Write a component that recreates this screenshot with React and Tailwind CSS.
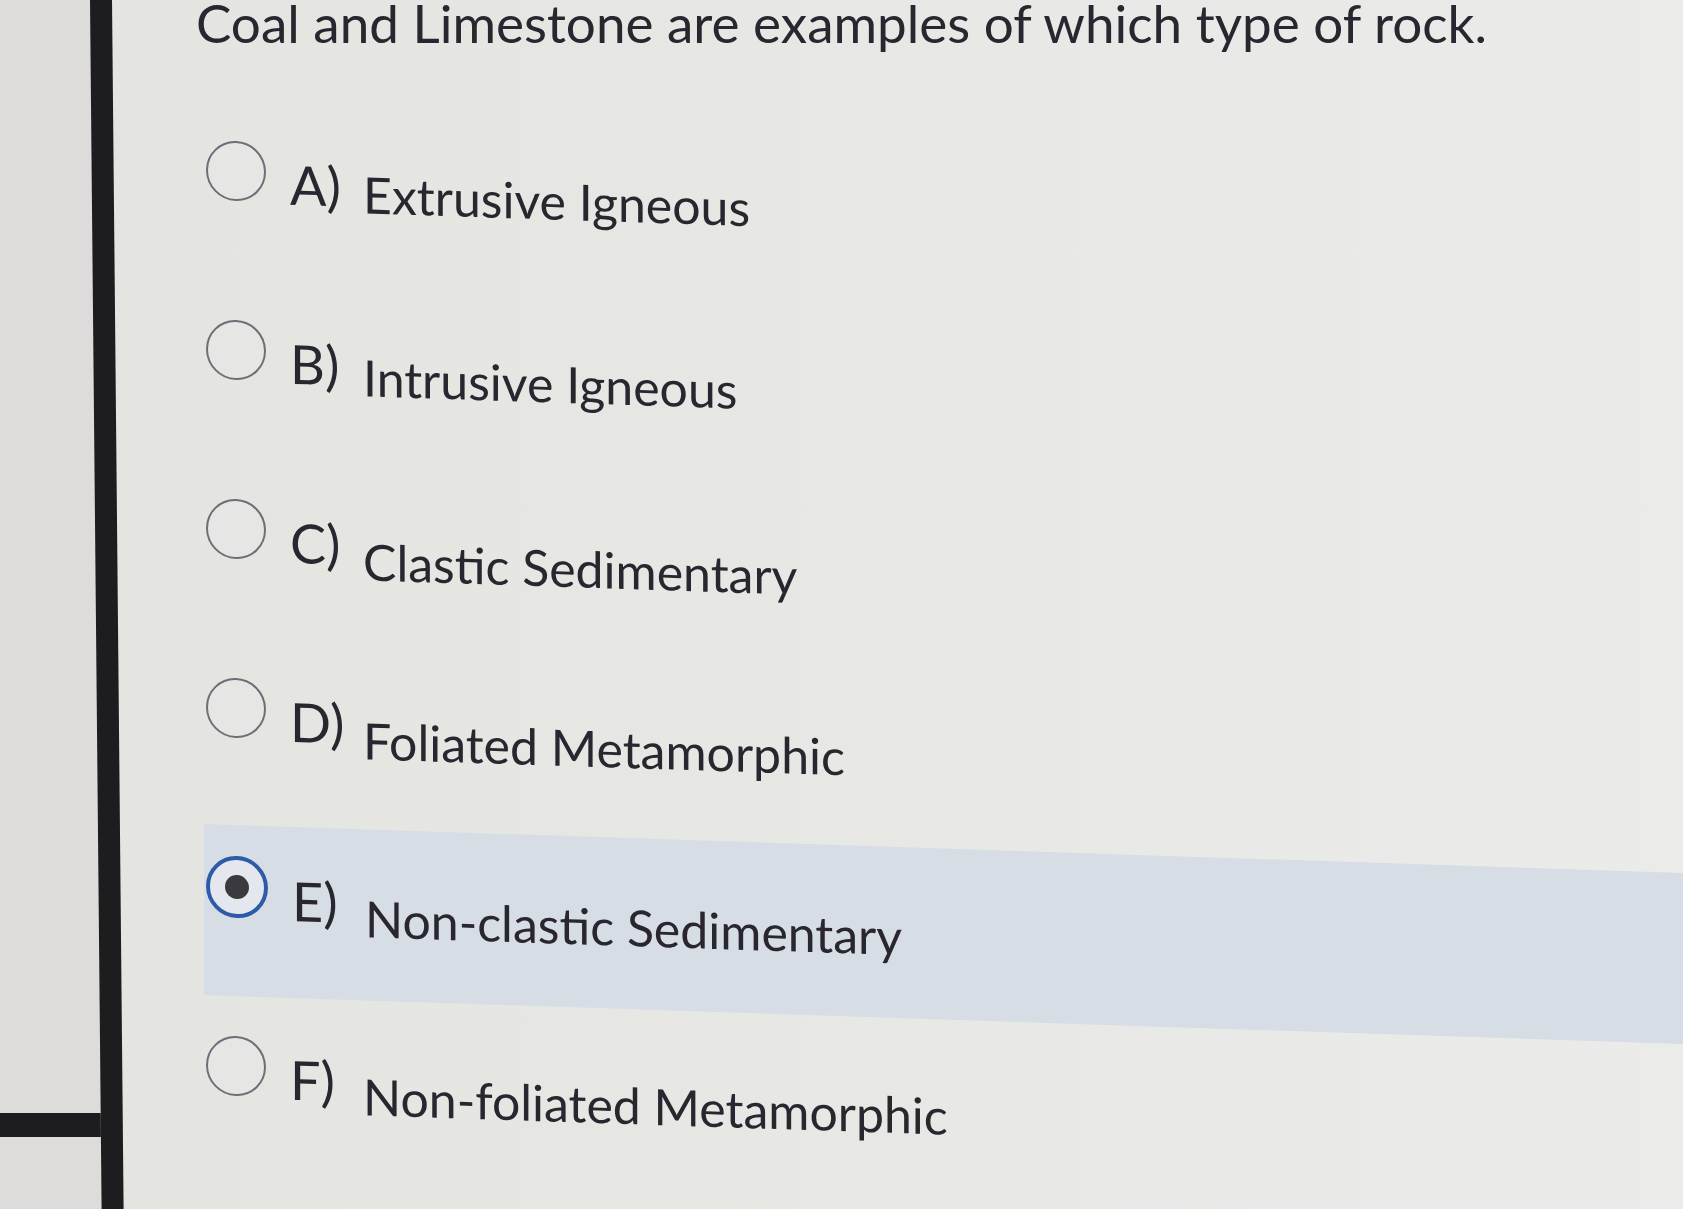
import React from "react";

const options = [
  { letter: "A)", text: "Extrusive Igneous", tmt: "mt-[56px]" },
  { letter: "B)", text: "Intrusive Igneous", tmt: "mt-[60px]" },
  { letter: "C)", text: "Clastic Sedimentary", tmt: "mt-[65px]" },
  { letter: "D)", text: "Foliated Metamorphic", tmt: "mt-[65px]" },
  { letter: "E)", text: "Non-clastic Sedimentary", tmt: "mt-[64px]", selected: true },
  { letter: "F)", text: "Non-foliated Metamorphic", tmt: "mt-[63px]" },
];

function Radio({ selected }) {
  if (selected) {
    return (
      <div className="mt-[31px] flex h-[62px] w-[62px] shrink-0 items-center justify-center rounded-full border-[4px] border-[#2d5ba8] bg-[#e4e8ee]">
        <div className="h-[24px] w-[24px] rounded-full bg-[#3a393d]" />
      </div>
    );
  }
  return (
    <div className="mt-[32px] h-[60px] w-[60px] shrink-0 rounded-full border-[2.5px] border-[#6f6d76] bg-[#e6e6e4]" />
  );
}

export default function App() {
  return (
    <div
      className="flex h-[1209px] w-[1683px] overflow-hidden bg-[#dcdbd9] text-[#2a2630]"
      style={{ fontFamily: "Lato, 'Open Sans', sans-serif" }}
    >
      <div className="-ml-[12px] flex w-[124px] shrink-0 origin-top skew-x-[0.55deg]">
        <div className="flex w-[102px] flex-col">
          <div className="h-[1113px] bg-[#dddcda]" />
          <div className="h-[24px] bg-[#1d1c1f]" />
          <div className="flex-1 bg-[#dddcda]" />
        </div>
        <div className="w-[22px] bg-[#1d1c1f]" />
      </div>

      <main className="flex-1 bg-linear-to-r from-[#e4e4e1] to-[#ebece9]">
        <h1 className="ml-[84px] text-[53px] leading-[46px] font-normal">
          Coal and Limestone are examples of which type of rock.
        </h1>

        <div className="mt-[62px] ml-[92px] flex origin-top-left skew-y-[1.9deg] flex-col gap-[8px]">
          {options.map((o) => (
            <div
              key={o.letter}
              className={
                o.selected
                  ? "flex h-[171px] items-start bg-[#d6dde5] pl-[2px]"
                  : "flex h-[171px] items-start pl-[2px]"
              }
            >
              <Radio selected={o.selected} />
              <span className="ml-[24px] mt-[47px] w-[73px] shrink-0 text-[54px] leading-[54px]">
                {o.letter}
              </span>
              <span className={`${o.tmt} whitespace-nowrap text-[50px] leading-[50px]`}>
                {o.text}
              </span>
            </div>
          ))}
        </div>
      </main>
    </div>
  );
}
